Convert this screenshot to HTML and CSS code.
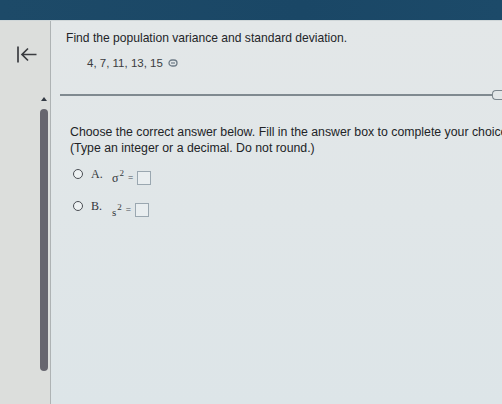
FILE: index.html
```html
<!DOCTYPE html>
<html>
<head>
<meta charset="utf-8">
<link rel="stylesheet" href="styles.css">
</head>
<body>
<div class="topbar"></div>
<div class="layout">
  <div class="sidebar">
    <div class="back">
      <svg width="22" height="19" viewBox="0 0 22 19"><path d="M2 1.5 V17.5" stroke="#3a3c40" stroke-width="1.7" fill="none"/><path d="M20.5 9.5 H6 M12 3.5 L6 9.5 L12 15.5" stroke="#3a3c40" stroke-width="1.7" fill="none"/></svg>
    </div>
    <div class="scroll">
      <div class="tri"></div>
      <div class="thumb"></div>
    </div>
  </div>
  <div class="main">
    <p class="title">Find the population variance and standard deviation.</p>
    <p class="data">4, 7, 11, 13, 15 <svg class="copy" width="10" height="8" viewBox="0 0 10 8"><rect x="1" y="1" width="8" height="6" rx="3" fill="none" stroke="#6d7b86" stroke-width="1.3"/><path d="M3 4 H7" stroke="#6d7b86" stroke-width="1.2"/></svg></p>
    <div class="rule-row"><div class="rule"></div><div class="handle"></div></div>
    <p class="instr">Choose the correct answer below. Fill in the answer box to complete your choice.</p>
    <p class="instr">(Type an integer or a decimal. Do not round.)</p>
    <div class="opt">
      <span class="radio"></span><span class="lbl">A.</span><span class="math">σ<sup>2</sup></span><span class="eq">=</span><span class="box"></span>
    </div>
    <div class="opt">
      <span class="radio"></span><span class="lbl">B.</span><span class="math s">s<sup>2</sup></span><span class="eq">=</span><span class="box"></span>
    </div>
  </div>
</div>
</body>
</html>
```
FILE: styles.css
```css
html, body {
  margin: 0;
  padding: 0;
}
body {
  width: 502px;
  height: 404px;
  overflow: hidden;
  background: #dfe5e7;
  font-family: "Liberation Sans", Arial, sans-serif;
  color: #2b2d30;
}
.topbar {
  height: 20px;
  background: linear-gradient(90deg, #1d4a68 0%, #1a4766 60%, #1c4a69 100%);
  border-bottom: 1px solid #cfd6d8;
}
.layout {
  display: flex;
  height: 383px;
}
.sidebar {
  width: 50px;
  flex: none;
  background: #dcdedc;
  border-right: 1px solid #aeb3b4;
  display: flex;
  flex-direction: column;
}
.back {
  margin: 24px 0 0 16px;
  height: 19px;
}
.scroll {
  margin: 33px 0 0 39px;
  display: flex;
  flex-direction: column;
  align-items: center;
  width: 10px;
}
.tri {
  width: 0;
  height: 0;
  border-left: 3.5px solid transparent;
  border-right: 3.5px solid transparent;
  border-bottom: 4px solid #333a44;
}
.thumb {
  margin-top: 8px;
  width: 8px;
  height: 262px;
  border-radius: 4px;
  background: #67666f;
}
.main {
  flex: 1;
  padding-top: 9px;
  background: linear-gradient(180deg, #e3e7e8 0%, #dde5e8 100%);
}
p {
  margin: 0;
}
.title {
  font-size: 12.1px;
  line-height: 16px;
  margin-left: 15px;
  color: #232529;
}
.data {
  font-size: 11.5px;
  line-height: 16px;
  margin: 9px 0 0 36px;
  color: #3a3c40;
  display: flex;
  align-items: center;
  gap: 3px;
}
.copy {
  margin-left: 2px;
}
.rule-row {
  display: flex;
  align-items: center;
  margin: 19px 0 0 9px;
}
.rule {
  width: 432px;
  height: 1.5px;
  background: #808a90;
}
.handle {
  width: 10px;
  height: 8px;
  border: 1.3px solid #7b868d;
  border-right: none;
  border-radius: 4px 0 0 4px;
}
.instr {
  font-size: 12.3px;
  line-height: 16px;
  margin-left: 19px;
  white-space: nowrap;
  color: #222427;
}
.rule-row + .instr {
  margin-top: 24px;
}
.opt {
  display: flex;
  align-items: center;
  margin-left: 22px;
  height: 20px;
  font-size: 11px;
  color: #34373b;
}
.instr + .opt {
  margin-top: 8px;
}
.opt + .opt {
  margin-top: 12px;
}
.radio {
  width: 8px;
  height: 8px;
  border: 1.3px solid #4a4e54;
  border-radius: 50%;
  background: #eef2f3;
}
.lbl {
  margin-left: 8px;
  width: 21px;
  font-family: "Liberation Serif", serif;
  font-size: 12px;
}
.math {
  font-family: "Liberation Serif", serif;
  font-size: 12px;
  margin-top: 5px;
}
.math.s {
  font-size: 11px;
  margin-top: 8px;
}
.math sup {
  font-size: 9px;
  vertical-align: 6px;
  margin-left: 1px;
}
.eq {
  margin: 5px 0 0 4px;
  font-size: 9px;
  color: #4a5058;
}
.box {
  margin: 8px 0 0 4px;
  width: 12px;
  height: 12px;
  border: 1px solid #9aa7b0;
  background: #e9eef0;
}
```
